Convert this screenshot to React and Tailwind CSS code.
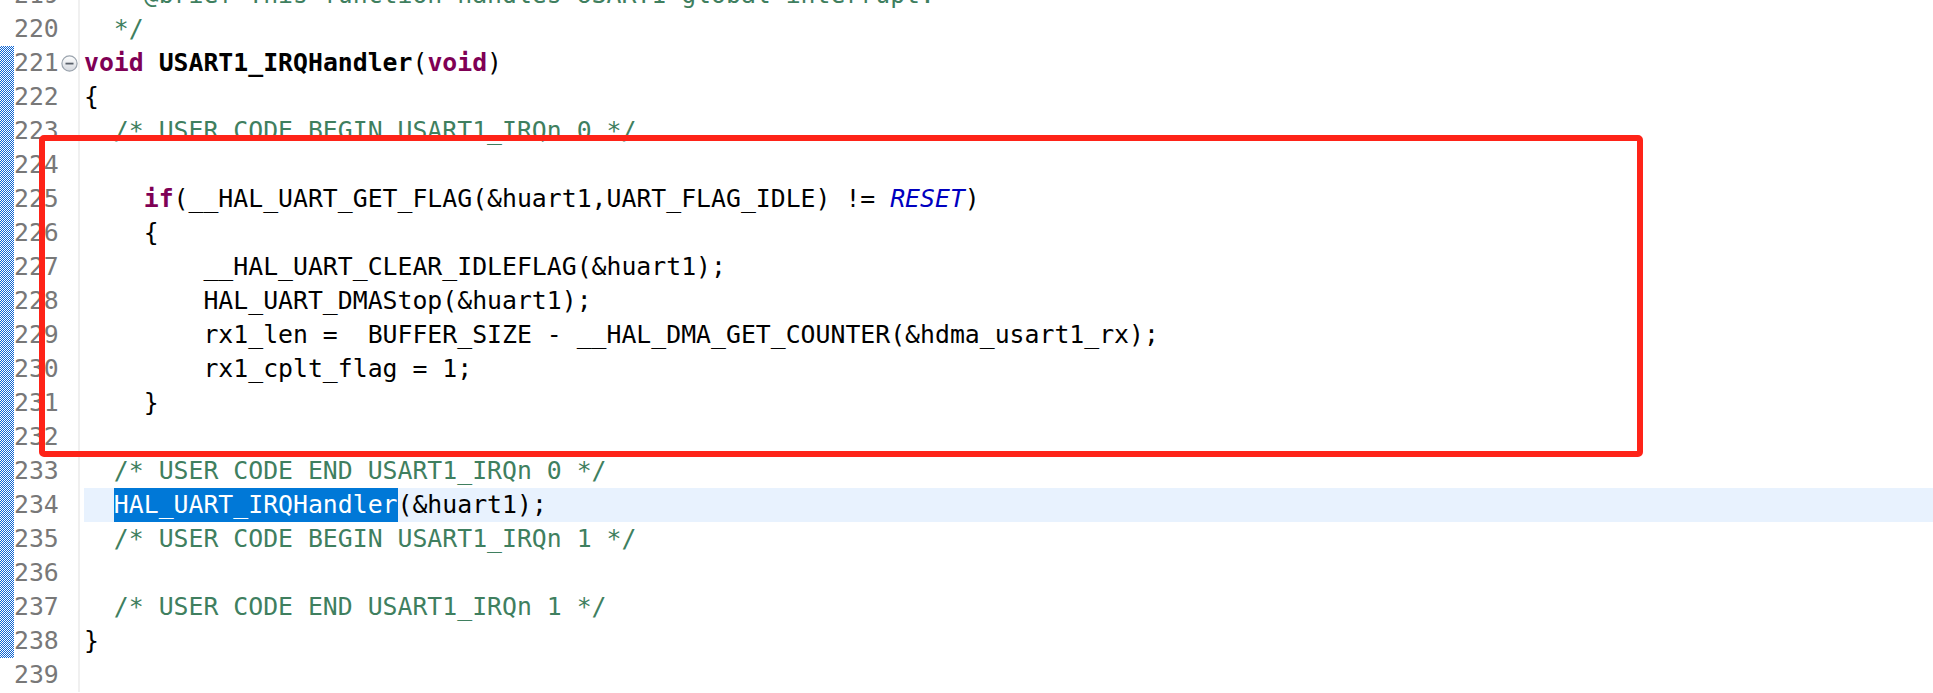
import React from "react";

// token helpers
const C = ({ children }) => <span className="text-[#3f7f5f]">{children}</span>;
const K = ({ children }) => <span className="font-bold text-[#7f0055]">{children}</span>;

const lines = [
  { n: 219, code: <C>{"  * @brief This function handles USART1 global interrupt."}</C> },
  { n: 220, code: <C>{"  */"}</C> },
  {
    n: 221,
    fold: true,
    code: (
      <>
        <K>void</K> <span className="font-bold">USART1_IRQHandler</span>(<K>void</K>)
      </>
    ),
  },
  { n: 222, code: "{" },
  { n: 223, code: <C>{"  /* USER CODE BEGIN USART1_IRQn 0 */"}</C> },
  { n: 224, code: "" },
  {
    n: 225,
    code: (
      <>
        {"    "}
        <K>if</K>
        {"(__HAL_UART_GET_FLAG(&huart1,UART_FLAG_IDLE) != "}
        <span className="italic text-[#0000c0]">RESET</span>)
      </>
    ),
  },
  { n: 226, code: "    {" },
  { n: 227, code: "        __HAL_UART_CLEAR_IDLEFLAG(&huart1);" },
  { n: 228, code: "        HAL_UART_DMAStop(&huart1);" },
  { n: 229, code: "        rx1_len =  BUFFER_SIZE - __HAL_DMA_GET_COUNTER(&hdma_usart1_rx);" },
  { n: 230, code: "        rx1_cplt_flag = 1;" },
  { n: 231, code: "    }" },
  { n: 232, code: "" },
  { n: 233, code: <C>{"  /* USER CODE END USART1_IRQn 0 */"}</C> },
  {
    n: 234,
    current: true,
    code: (
      <>
        {"  "}
        <span className="inline-block bg-[#0078d7] text-white">HAL_UART_IRQHandler</span>
        {"(&huart1);"}
      </>
    ),
  },
  { n: 235, code: <C>{"  /* USER CODE BEGIN USART1_IRQn 1 */"}</C> },
  { n: 236, code: "" },
  { n: 237, code: <C>{"  /* USER CODE END USART1_IRQn 1 */"}</C> },
  { n: 238, code: "}" },
  { n: 239, code: "" },
];

function FoldIcon() {
  return (
    <svg width="17" height="17" viewBox="0 0 17 17">
      <defs>
        <linearGradient id="fg" x1="0" y1="0" x2="0" y2="1">
          <stop offset="0" stopColor="#ffffff" />
          <stop offset="1" stopColor="#d4d8de" />
        </linearGradient>
      </defs>
      <circle cx="8.5" cy="8.5" r="7.6" fill="url(#fg)" stroke="#9aa3ad" strokeWidth="1.2" />
      <rect x="4.5" y="7.7" width="8" height="1.8" fill="#59606a" />
    </svg>
  );
}

export default function App() {
  return (
    <div className="relative h-[693px] w-full overflow-hidden bg-white font-['DejaVu_Sans_Mono',monospace] text-[24.8px] leading-[34px] text-black">
      <div className="-mt-[22px] flex flex-col">
        {lines.map((l) => {
          const marked = l.n >= 221 && l.n <= 238;
          return (
            <div key={l.n} className="flex h-[34px] items-stretch">
              <div
                className={
                  marked
                    ? "w-[14px] shrink-0 bg-[image:repeating-conic-gradient(#0b64d4_0_25%,#ffffff_0_50%)] bg-[length:2px_2px]"
                    : "w-[14px] shrink-0"
                }
              />
              <div className="w-[44px] shrink-0 text-right text-[#787878]">{l.n}</div>
              <div className="flex w-[20px] shrink-0 items-center justify-center pl-[2px]">
                {l.fold && <FoldIcon />}
              </div>
              <div className="w-[2px] shrink-0 bg-[#f0f0f0]" />
              <div className="w-[4px] shrink-0" />
              <div className={l.current ? "flex-1 whitespace-pre bg-[#e8f2fe]" : "flex-1 whitespace-pre"}>
                {l.code}
              </div>
            </div>
          );
        })}
      </div>
      <div className="absolute left-[39px] top-[135px] h-[322px] w-[1604px] rounded-[5px] border-[6px] border-[#fe2318]" />
    </div>
  );
}
